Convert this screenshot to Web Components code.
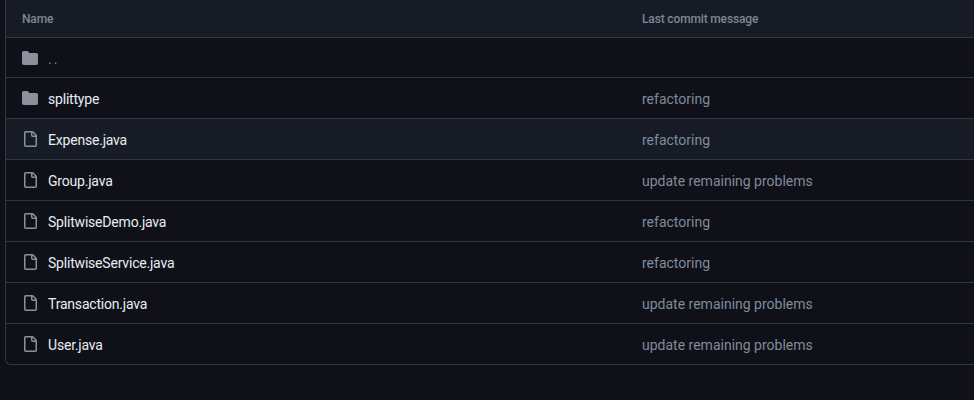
<!DOCTYPE html>
<html>
<head>
<meta charset="utf-8">
<title>Files</title>
<style>
  html, body { margin: 0; height: 100%; overflow: hidden; background: #101118; }
  body { font-family: Roboto, "Noto Sans", sans-serif; padding-left: 5px; }
</style>
</head>
<body>
<file-table>
  <file-row type="dir" name=".." class="up"></file-row>
  <file-row type="dir" name="splittype" message="refactoring"></file-row>
  <file-row type="file" name="Expense.java" message="refactoring" hover></file-row>
  <file-row type="file" name="Group.java" message="update remaining problems"></file-row>
  <file-row type="file" name="SplitwiseDemo.java" message="refactoring"></file-row>
  <file-row type="file" name="SplitwiseService.java" message="refactoring"></file-row>
  <file-row type="file" name="Transaction.java" message="update remaining problems"></file-row>
  <file-row type="file" name="User.java" message="update remaining problems"></file-row>
</file-table>
<script>
const ICONS = {
  dir: '<path fill="#8b919c" d="M1.75 1A1.75 1.75 0 0 0 0 2.75v10.5C0 14.216.784 15 1.75 15h12.5A1.75 1.75 0 0 0 16 13.25v-8.5A1.75 1.75 0 0 0 14.25 3H7.5a.25.25 0 0 1-.2-.1l-.9-1.2C6.07 1.26 5.55 1 5 1H1.75Z"/>',
  file: '<path fill="#8b919c" d="M2 1.75C2 .784 2.784 0 3.75 0h6.586c.464 0 .909.184 1.237.513l2.914 2.914c.329.328.513.773.513 1.237v9.586A1.75 1.75 0 0 1 13.25 16h-9.5A1.75 1.75 0 0 1 2 14.25Zm1.75-.25a.25.25 0 0 0-.25.25v12.5c0 .138.112.25.25.25h9.5a.25.25 0 0 0 .25-.25V6h-2.75A1.75 1.75 0 0 1 9 4.25V1.5Zm6.75.062V4.25c0 .138.112.25.25.25h2.688l-.011-.013-2.914-2.914-.013-.011Z"/>'
};

class FileTable extends HTMLElement {
  constructor() {
    super();
    this.attachShadow({ mode: 'open' });
    this.shadowRoot.innerHTML = `
      <style>
        :host {
          display: block;
          border-left: 1px solid #30363d;
          border-bottom: 1px solid #30363d;
          border-bottom-left-radius: 6px;
          overflow: hidden;
        }
        .head {
          display: grid;
          grid-template-columns: 636px 1fr;
          align-items: center;
          height: 37px;
          background: #171b25;
          border-bottom: 1px solid #30363d;
          font-size: 12px;
          font-weight: 500;
          letter-spacing: -0.15px;
          color: #7d8696;
        }
        .head span:first-child { padding-left: 16px; }
      </style>
      <div class="head"><span>Name</span><span>Last commit message</span></div>
      <slot></slot>
    `;
  }
}
customElements.define('file-table', FileTable);

class FileRow extends HTMLElement {
  constructor() {
    super();
    this.attachShadow({ mode: 'open' });
  }

  connectedCallback() {
    const type = this.getAttribute('type');
    this.shadowRoot.innerHTML = `
      <style>
        :host {
          display: grid;
          grid-template-columns: 636px 1fr;
          align-items: center;
          height: 40px;
          border-bottom: 1px solid #30363d;
          font-size: 14px;
          color: #e6edf3;
        }
        :host(:first-child) { height: 39px; }
        :host(:last-child) { border-bottom: none; }
        :host([hover]) { background: #171b25; }
        :host(.up) span { letter-spacing: 2px; color: #7f8b9d; }
        .name { display: flex; align-items: center; gap: 10px; padding-left: 16px; }
        svg { display: block; flex: none; }
        span { letter-spacing: -0.2px; padding-top: 2px; }
        .msg { color: #7f8b9d; padding-top: 2px; }
      </style>
      <div class="name">
        <svg width="16" height="16" viewBox="0 0 16 16">${ICONS[type]}</svg>
        <span>${this.getAttribute('name')}</span>
      </div>
      <div class="msg">${this.getAttribute('message') || ''}</div>
    `;
  }
}
customElements.define('file-row', FileRow);
</script>
</body>
</html>
